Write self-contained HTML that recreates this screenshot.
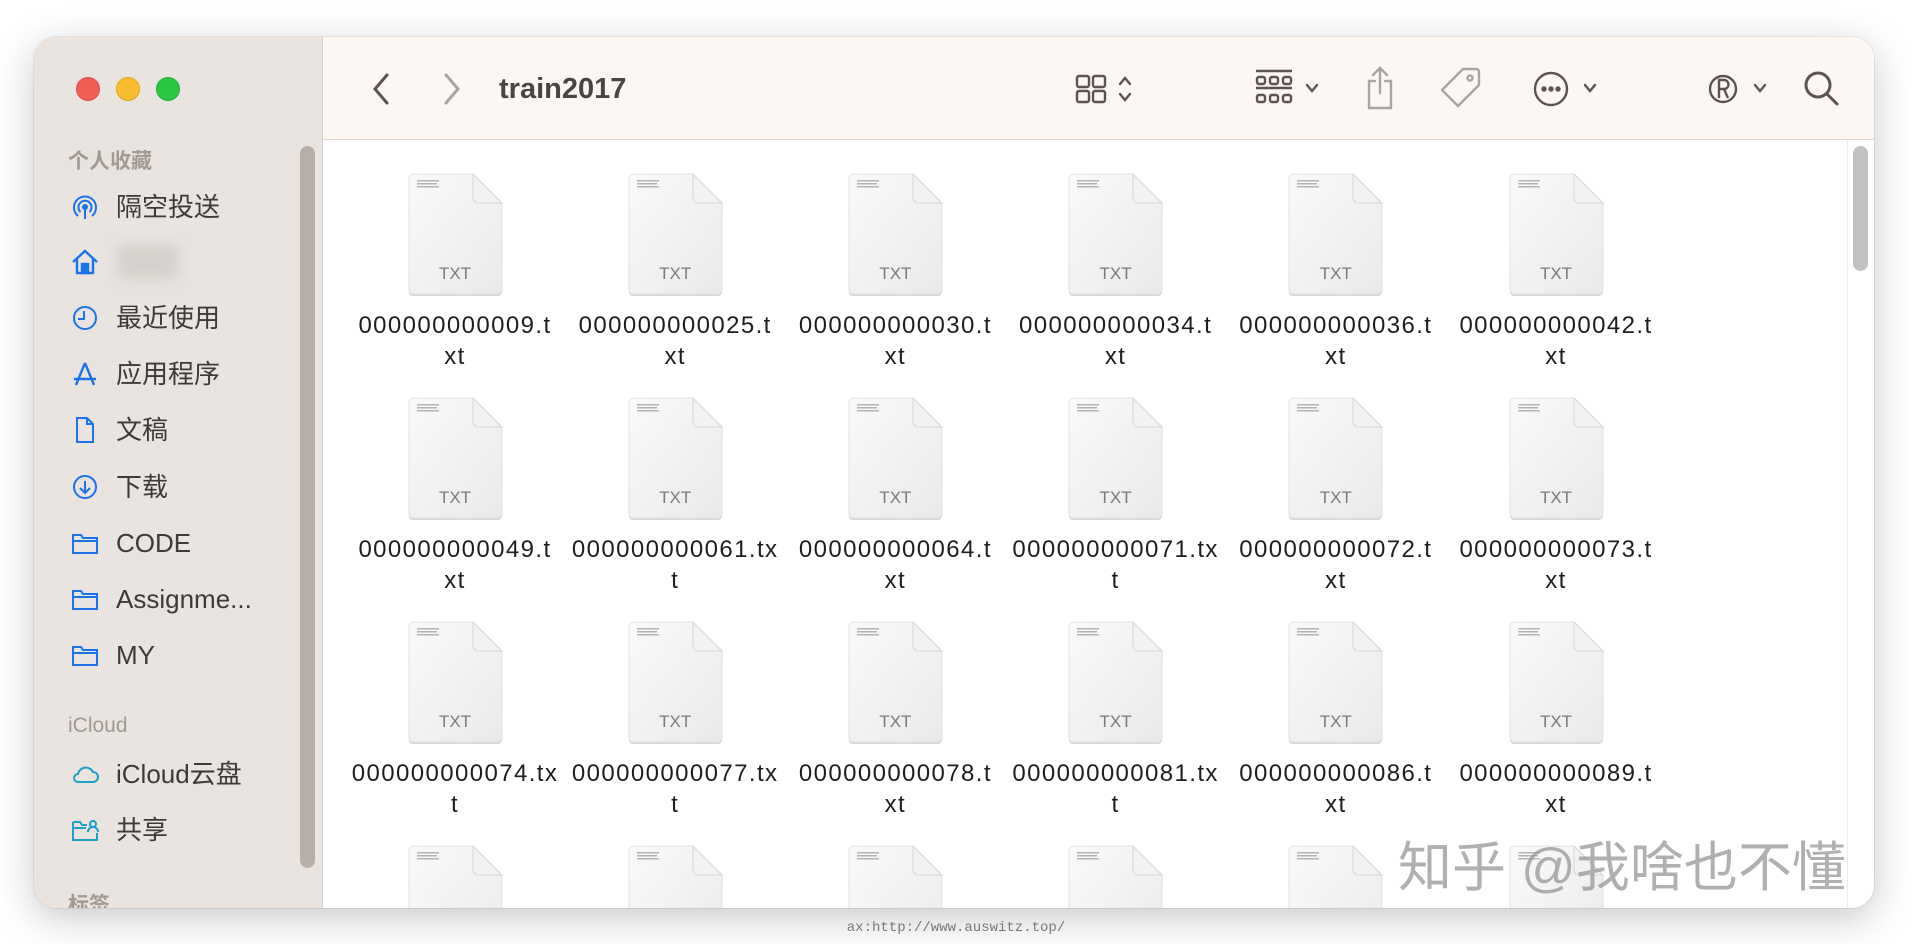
<!DOCTYPE html>
<html style="overflow:hidden"><head><meta charset="utf-8">
<style>
*{margin:0;padding:0;box-sizing:border-box}
html,body{width:1912px;height:944px;overflow:hidden}
body{background:#fff;position:relative;font-family:"Liberation Sans","Noto Sans CJK SC",sans-serif}
.win{position:absolute;left:34px;top:37px;width:1840px;height:871px;border-radius:22px;overflow:hidden;box-shadow:0 10px 40px rgba(0,0,0,.22),0 0 0 1px rgba(0,0,0,.06);background:#fff}
.side{position:absolute;left:0;top:0;width:289px;height:871px;background:#e9e4e0;border-right:1px solid #d8d2ce}
.tl{position:absolute;top:40px;width:24px;height:24px;border-radius:50%}
.sh{position:absolute;left:34px;font-size:21px;color:#a09994;font-weight:bold}
.it{position:absolute;left:82px;font-size:26px;color:#3e3a39;line-height:30px;height:30px;white-space:nowrap}
.ic{position:absolute;left:36px;width:30px;height:30px}
.tb{position:absolute;left:289px;top:0;right:0;height:103px;background:#fcf7f3;border-bottom:1px solid #dedad6}
.tb svg{position:absolute}
.file{position:absolute;width:220px;text-align:center;height:224px;overflow:visible}
.file svg{display:block;margin:0 auto}
.txt{position:absolute;left:0;width:100%;top:92px;font-size:17px;color:#7a7a7a}
.lab{font-size:24px;letter-spacing:1.4px;color:#1e1e1e;line-height:31px;margin-top:12px;white-space:nowrap}
#grid{position:absolute;left:0;top:0;width:1840px;height:871px;overflow:hidden}
</style></head><body>
<svg width="0" height="0" style="position:absolute">
<defs>
<linearGradient id="g" x1="0" y1="0" x2="1" y2="1"><stop offset="0" stop-color="#fafafa"/><stop offset="1" stop-color="#e9e9e9"/></linearGradient>
<symbol id="doc" viewBox="0 0 97 126">
<path d="M6,2 H66 L95,31 V118 a4 4 0 0 1 -4 4 H6 a4 4 0 0 1 -4 -4 V6 a4 4 0 0 1 4 -4Z" fill="#d8d8d8" transform="translate(0,2)"/>
<path d="M6,2 H66 L95,31 V118 a4 4 0 0 1 -4 4 H6 a4 4 0 0 1 -4 -4 V6 a4 4 0 0 1 4 -4Z" fill="url(#g)" stroke="#e2e2e2"/>
<path d="M66,2 V26 a5 5 0 0 0 5 5 H95 Z" fill="#f2f2f2" stroke="#d6d6d6"/>
<g fill="#b5b5b5"><rect x="10" y="8" width="22" height="1.5"/><rect x="10" y="11" width="20" height="1.5"/><rect x="10" y="14" width="22" height="1.5"/></g>
</symbol>
</defs></svg>

<div class="win">
<div class="side">
<div class="tl" style="left:42px;background:#f25d55;border:1px solid #de4a43"></div>
<div class="tl" style="left:82px;background:#f8bc2e;border:1px solid #e0a521"></div>
<div class="tl" style="left:122px;background:#2ac840;border:1px solid #1fae33"></div>
<div class="sh" style="top:108px">个人收藏</div>
<svg class="ic" style="top:155px" viewBox="0 0 30 30" fill="none" stroke="#1a73e8" stroke-width="2"><path d="M8 24 A11 11 0 1 1 22 24"/><path d="M10.5 20 A6.5 6.5 0 1 1 19.5 20"/><circle cx="15" cy="15" r="2" fill="#1a73e8"/><path d="M15 17 V27"/></svg>
<div class="it" style="top:155px">隔空投送</div>
<svg class="ic" style="top:210px" viewBox="0 0 30 30" fill="none" stroke="#1a73e8" stroke-width="2.4"><path d="M3 15 L15 4 L27 15"/><path d="M7 12 V26 H23 V12"/><rect x="12" y="17" width="6" height="9" fill="#1a73e8"/></svg>
<div style="position:absolute;left:84px;top:208px;width:60px;height:34px;background:#d6d0cc;filter:blur(6px)"></div>
<svg class="ic" style="top:266px" viewBox="0 0 30 30" fill="none" stroke="#1a73e8" stroke-width="2"><circle cx="15" cy="15" r="11"/><path d="M14 8 V16 H8"/></svg>
<div class="it" style="top:266px">最近使用</div>
<svg class="ic" style="top:322px" viewBox="0 0 30 30" fill="none" stroke="#1a73e8" stroke-width="2.4"><path d="M15 4 L6 26 M15 4 L24 26 M4 20 H26"/></svg>
<div class="it" style="top:322px">应用程序</div>
<svg class="ic" style="top:378px" viewBox="0 0 30 30" fill="none" stroke="#1a73e8" stroke-width="2"><path d="M7 3 H17 L23 9 V27 H7 Z M17 3 V9 H23"/></svg>
<div class="it" style="top:378px">文稿</div>
<svg class="ic" style="top:435px" viewBox="0 0 30 30" fill="none" stroke="#1a73e8" stroke-width="2"><circle cx="15" cy="15" r="11"/><path d="M15 9 V20 M10 16 L15 21 L20 16"/></svg>
<div class="it" style="top:435px">下载</div>
<svg class="ic" style="top:491px" viewBox="0 0 30 30" fill="none" stroke="#1a73e8" stroke-width="2"><path d="M3 7 H11 L13 10 H27 V25 H3 Z M3 13 H27"/></svg>
<div class="it" style="top:491px">CODE</div>
<svg class="ic" style="top:547px" viewBox="0 0 30 30" fill="none" stroke="#1a73e8" stroke-width="2"><path d="M3 7 H11 L13 10 H27 V25 H3 Z M3 13 H27"/></svg>
<div class="it" style="top:547px">Assignme...</div>
<svg class="ic" style="top:603px" viewBox="0 0 30 30" fill="none" stroke="#1a73e8" stroke-width="2"><path d="M3 7 H11 L13 10 H27 V25 H3 Z M3 13 H27"/></svg>
<div class="it" style="top:603px">MY</div>
<div class="sh" style="top:677px;font-weight:normal">iCloud</div>
<svg class="ic" style="top:722px" viewBox="0 0 30 30" fill="none" stroke="#1ea0c8" stroke-width="2"><path d="M8 23 H23 a5 5 0 0 0 0 -10 a8 8 0 0 0 -15 2 a4 4 0 0 0 0 8Z"/></svg>
<div class="it" style="top:722px">iCloud云盘</div>
<svg class="ic" style="top:778px" viewBox="0 0 30 30" fill="none" stroke="#1ea0c8" stroke-width="2"><path d="M3 7 H10 L12 10 H17 M3 7 V25 H27 V18 M3 13 H16"/><circle cx="23" cy="9" r="3"/><path d="M18 17 a5 5 0 0 1 10 0"/></svg>
<div class="it" style="top:778px">共享</div>
<div class="sh" style="top:852px">标签</div>
<div style="position:absolute;left:266px;top:109px;width:15px;height:722px;border-radius:8px;background:#b7aeaa"></div>
</div>

<div class="tb">
<svg style="left:47px;top:34px" width="22" height="36" viewBox="0 0 22 36" fill="none" stroke="#5a5352" stroke-width="3" stroke-linecap="round"><path d="M17 4 L5 18 L17 32"/></svg>
<svg style="left:118px;top:34px" width="22" height="36" viewBox="0 0 22 36" fill="none" stroke="#aaa4a2" stroke-width="3" stroke-linecap="round"><path d="M5 4 L17 18 L5 32"/></svg>
<div style="position:absolute;left:176px;top:36px;font-size:29px;font-weight:bold;color:#4a4545">train2017</div>
<svg style="left:751px;top:33px" width="64" height="38" viewBox="0 0 64 38" fill="none" stroke="#5a5352" stroke-width="2.4"><rect x="3" y="6" width="12" height="11" rx="2"/><rect x="19" y="6" width="12" height="11" rx="2"/><rect x="3" y="21" width="12" height="11" rx="2"/><rect x="19" y="21" width="12" height="11" rx="2"/><path d="M46 14 L51 8 L56 14 M46 24 L51 30 L56 24" stroke-linecap="round"/></svg>
<svg style="left:930px;top:30px" width="80" height="44" viewBox="0 0 80 44" fill="none" stroke="#5a5352" stroke-width="2.4"><path d="M3 4 H39 M3 21 H39"/><rect x="4" y="10" width="8" height="7" rx="2"/><rect x="17" y="10" width="8" height="7" rx="2"/><rect x="30" y="10" width="8" height="7" rx="2"/><rect x="4" y="28" width="8" height="7" rx="2"/><rect x="17" y="28" width="8" height="7" rx="2"/><rect x="30" y="28" width="8" height="7" rx="2"/><path d="M54 18 L59 24 L64 18" stroke-linecap="round"/></svg>
<svg style="left:1041px;top:28px" width="32" height="46" viewBox="0 0 32 46" fill="none" stroke="#aaa4a2" stroke-width="2.4" stroke-linecap="round"><path d="M16 3 V28 M9 10 L16 3 L23 10"/><path d="M11 16 H5 V43 H27 V16 H21"/></svg>
<svg style="left:1115px;top:28px" width="46" height="46" viewBox="0 0 46 46" fill="none" stroke="#aaa4a2" stroke-width="2.4" stroke-linejoin="round"><path d="M25 4 H38 a3 3 0 0 1 3 3 V20 L20 41 L4 25 Z"/><circle cx="32" cy="13" r="2.5"/></svg>
<svg style="left:1209px;top:30px" width="80" height="44" viewBox="0 0 80 44" fill="none" stroke="#5a5352" stroke-width="2.4"><circle cx="19" cy="22" r="16"/><circle cx="12" cy="22" r="1.5" fill="#5a5352"/><circle cx="19" cy="22" r="1.5" fill="#5a5352"/><circle cx="26" cy="22" r="1.5" fill="#5a5352"/><path d="M53 18 L58 24 L63 18" stroke-linecap="round"/></svg>
<svg style="left:1381px;top:30px" width="80" height="44" viewBox="0 0 80 44" fill="none" stroke="#5a5352" stroke-width="2.4"><circle cx="19" cy="22" r="13"/><path d="M15 31 V13 H20 a4.5 4.5 0 0 1 0 9 H15 M20 22 L24 31"/><path d="M51 18 L56 24 L61 18" stroke-linecap="round"/></svg>
<svg style="left:1477px;top:30px" width="44" height="44" viewBox="0 0 44 44" fill="none" stroke="#5a5352" stroke-width="3" stroke-linecap="round"><circle cx="18" cy="18" r="12"/><path d="M27 27 L37 37"/></svg>
</div>

<div style="position:absolute;left:1813px;top:103px;width:1px;height:768px;background:#ececec"></div>
<div style="position:absolute;left:1819px;top:109px;width:15px;height:125px;border-radius:8px;background:#c2c2c2"></div>

<div id="grid"></div>
</div>

<div style="position:absolute;left:1398px;top:836px;font-size:54px;line-height:64px;color:rgba(150,150,150,.75);white-space:nowrap">知乎 @我啥也不懂</div>
<div style="position:absolute;left:0;width:1912px;text-align:center;top:920px;font-size:14px;line-height:16px;color:#777;font-family:'Liberation Mono',monospace">ax:http://www.auswitz.top/</div>

<script>
var names=[["000000000009.t","xt"],["000000000025.t","xt"],["000000000030.t","xt"],["000000000034.t","xt"],["000000000036.t","xt"],["000000000042.t","xt"],
["000000000049.t","xt"],["000000000061.tx","t"],["000000000064.t","xt"],["000000000071.tx","t"],["000000000072.t","xt"],["000000000073.t","xt"],
["000000000074.tx","t"],["000000000077.tx","t"],["000000000078.t","xt"],["000000000081.tx","t"],["000000000086.t","xt"],["000000000089.t","xt"],
["",""],["",""],["",""],["",""],["",""],["",""]];
var h="";
for(var i=0;i<names.length;i++){var c=i%6,r=Math.floor(i/6);
var x=(455-34)+c*220.2-110, y=(172-37)+r*224;
h+='<div class="file" style="left:'+x+'px;top:'+y+'px"><svg width="97" height="126"><use href="#doc"/></svg><div class="txt">TXT</div><div class="lab">'+names[i][0]+'<br>'+names[i][1]+'</div></div>';}
document.getElementById("grid").innerHTML=h;
</script>
</body></html>
